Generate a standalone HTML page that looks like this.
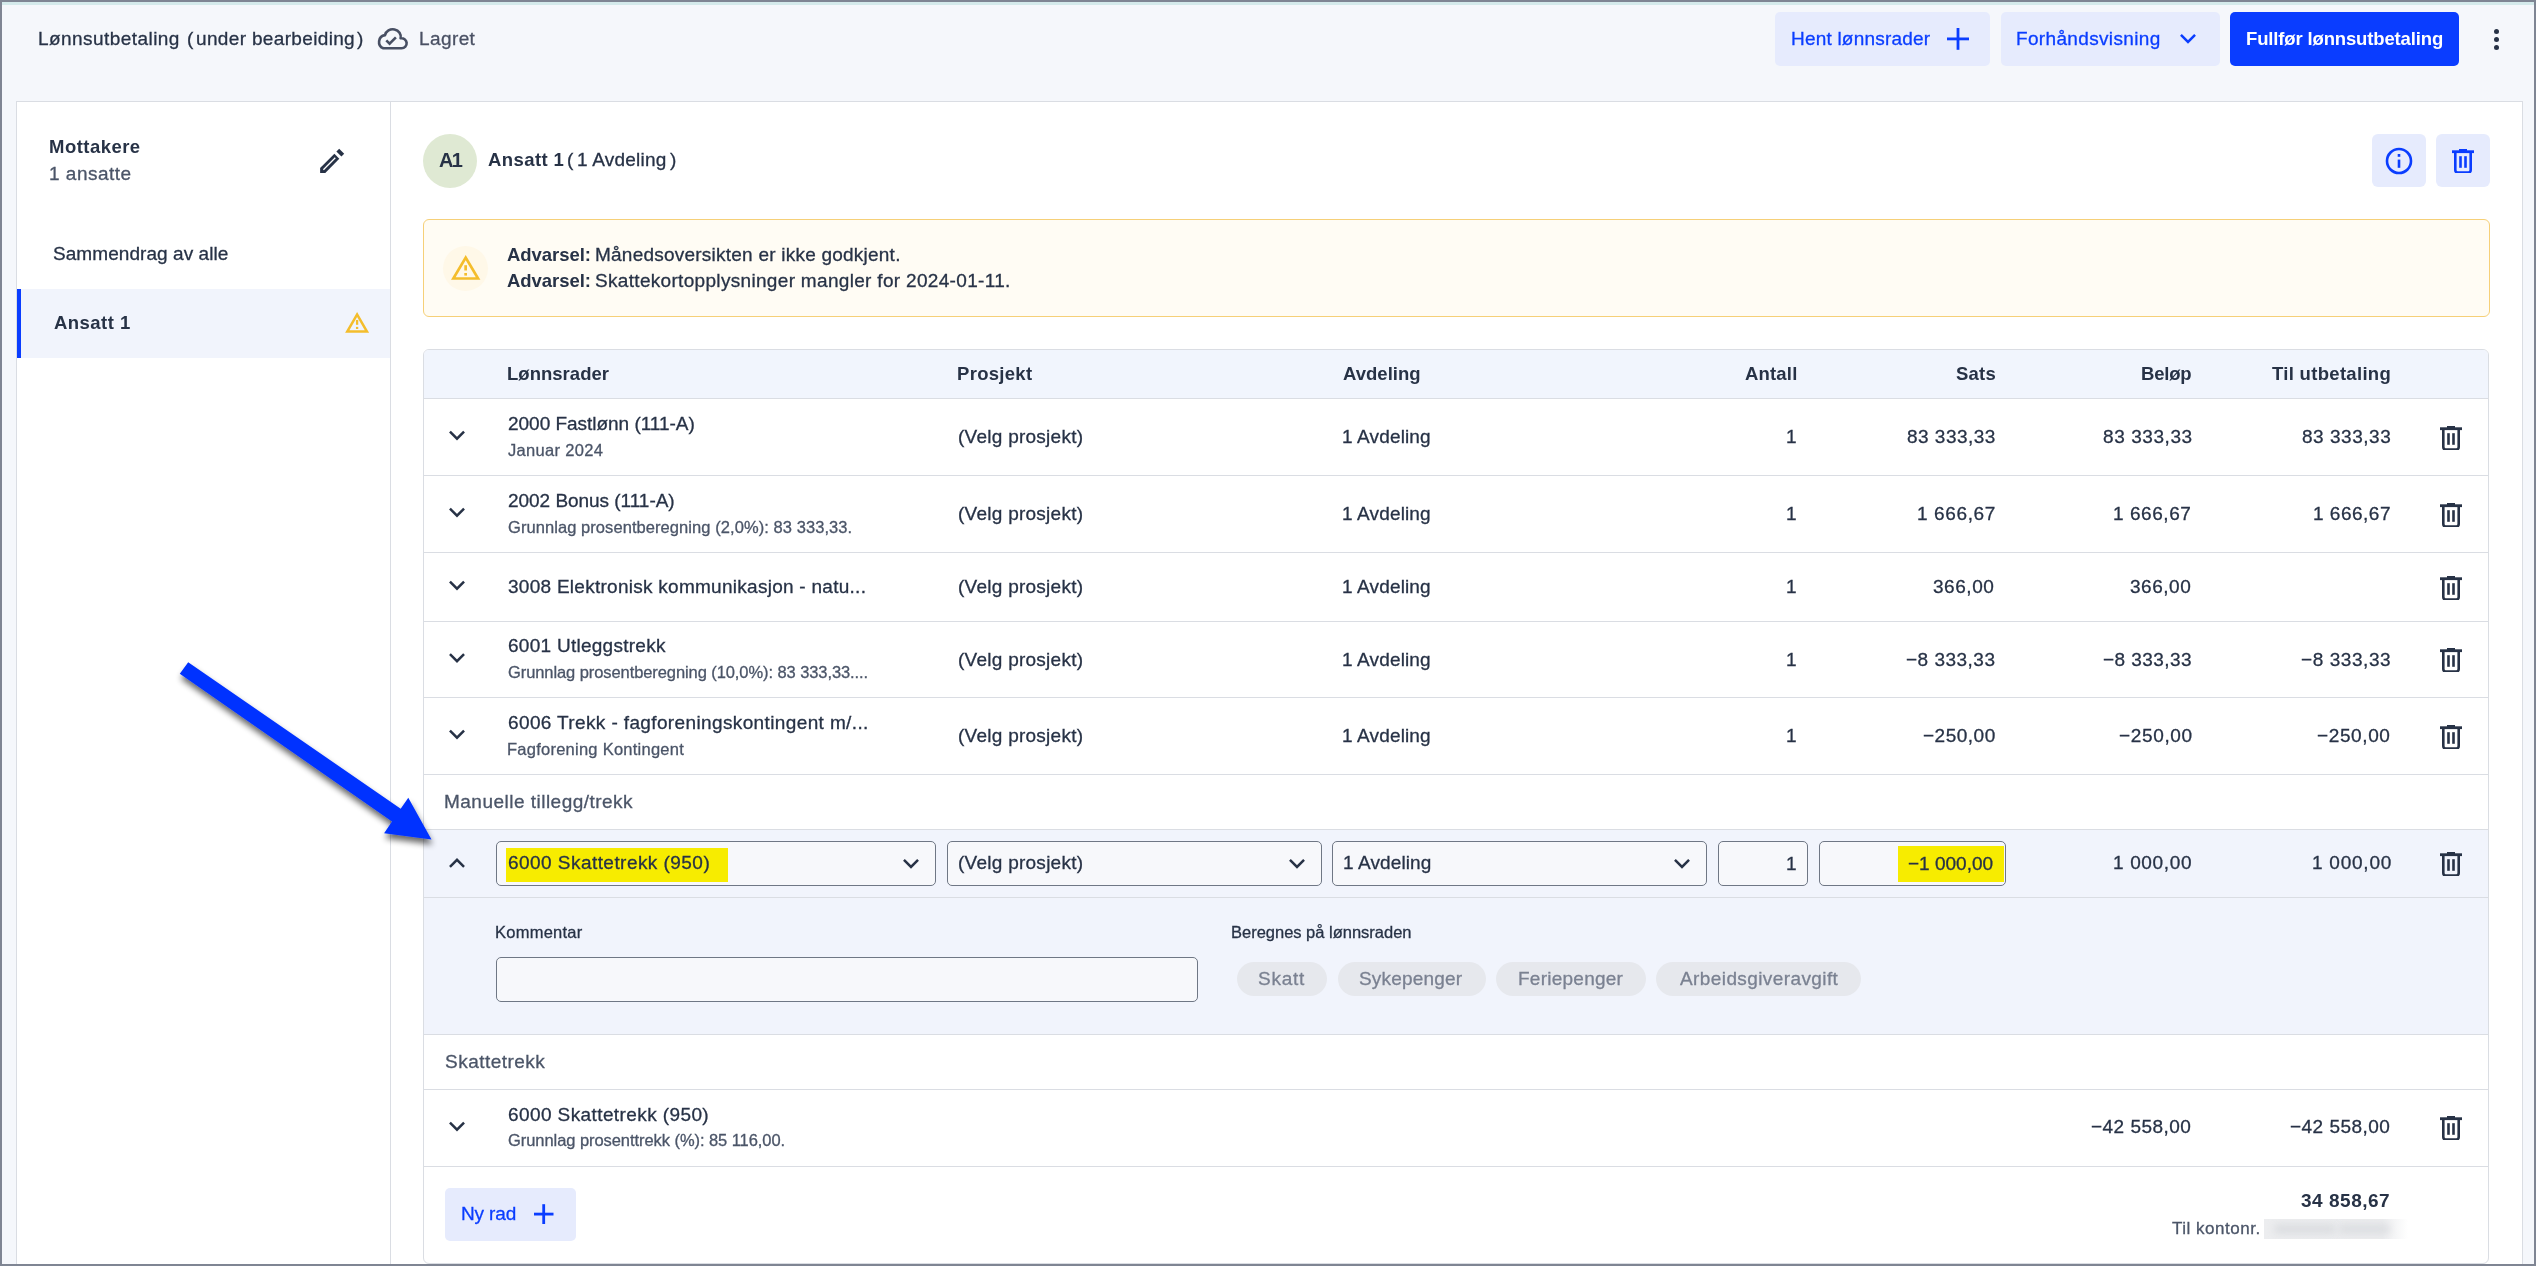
<!DOCTYPE html><html><head><meta charset="utf-8"><style>
html,body{margin:0;padding:0;}
body{width:2536px;height:1266px;position:relative;overflow:hidden;background:#f5f7fb;font-family:"Liberation Sans",sans-serif;}
.t{position:absolute;white-space:nowrap;line-height:1;will-change:transform;}
.r{-webkit-text-stroke:0.3px currentColor;}
</style></head><body>
<div style="position:absolute;left:0px;top:2px;width:2536px;height:3px;background:#d4eaeb"></div>
<div class="t r" id="f1" style="left:38.0px;top:28.85px;font-size:19px;font-weight:400;color:#273246;letter-spacing:0.442px;">Lønnsutbetaling</div>
<div class="t r" style="left:186.5px;top:28.85px;font-size:19px;font-weight:400;color:#273246;">(</div>
<div class="t r" id="f2" style="left:196.0px;top:28.85px;font-size:19px;font-weight:400;color:#273246;letter-spacing:0.344px;">under bearbeiding</div>
<div class="t r" style="left:356.5px;top:28.85px;font-size:19px;font-weight:400;color:#273246;">)</div>
<svg style="position:absolute;left:370px;top:20px" width="45" height="36" viewBox="370 20 45 36"><path d="M383.3,48.3 A6.9,6.9 0 0 1 385,35.1 A7.97,7.4 0 0 1 400.6,38.3 A5.05,5.05 0 1 1 401.6,48.3 Z" fill="none" stroke="#474f63" stroke-width="2.6" stroke-linejoin="round"/><polyline points="386.3,40.4 389.6,43.7 395.9,37.4" fill="none" stroke="#474f63" stroke-width="2.6"/></svg>
<div class="t r" id="f3" style="left:419.0px;top:28.85px;font-size:19px;font-weight:400;color:#4a5164;letter-spacing:0.4px;">Lagret</div>
<div style="position:absolute;left:1775px;top:12px;width:215px;height:54px;background:#e6ebfd;border-radius:5px"></div>
<div class="t r" id="f4" style="left:1790.7px;top:28.85px;font-size:19px;font-weight:400;color:#0a3dff;letter-spacing:0.201px;">Hent lønnsrader</div>
<svg style="position:absolute;left:1940px;top:22px" width="36" height="34" viewBox="1940 22 36 34"><rect x="1956.6" y="28" width="2.8" height="21.8" fill="#0a3dff"/><rect x="1947" y="37.5" width="22" height="2.8" fill="#0a3dff"/></svg>
<div style="position:absolute;left:2001px;top:12px;width:219px;height:54px;background:#e6ebfd;border-radius:5px"></div>
<div class="t r" id="f5" style="left:2016.2px;top:28.85px;font-size:19px;font-weight:400;color:#0a3dff;letter-spacing:0.344px;">Forhåndsvisning</div>
<svg style="position:absolute;left:2176px;top:30px" width="22" height="16" viewBox="2176 30 22 16"><polyline points="2180.95,34.88 2188.00,41.93 2195.05,34.88" fill="none" stroke="#0a3dff" stroke-width="2.5" stroke-linecap="butt" stroke-linejoin="miter"/></svg>
<div style="position:absolute;left:2230px;top:12px;width:229px;height:54px;background:#0a3dff;border-radius:5px"></div>
<div class="t" id="f6" style="left:2245.6px;top:30.07px;font-size:18.5px;font-weight:700;color:#fff;letter-spacing:-0.146px;">Fullfør lønnsutbetaling</div>
<div style="position:absolute;left:2493.5px;top:28.5px;width:5px;height:5px;background:#273246;border-radius:50%"></div>
<div style="position:absolute;left:2493.5px;top:36.5px;width:5px;height:5px;background:#273246;border-radius:50%"></div>
<div style="position:absolute;left:2493.5px;top:44.5px;width:5px;height:5px;background:#273246;border-radius:50%"></div>
<div style="position:absolute;left:16px;top:101px;width:2507px;height:1200px;background:#fff;border:1px solid #dadde3;box-sizing:border-box"></div>
<div style="position:absolute;left:390px;top:102px;width:1px;height:1200px;background:#dadde3"></div>
<div class="t" id="f7" style="left:48.6px;top:138.08px;font-size:18.5px;font-weight:700;color:#273246;letter-spacing:0.466px;">Mottakere</div>
<div class="t r" id="f8" style="left:48.6px;top:163.85px;font-size:19px;font-weight:400;color:#4b5568;letter-spacing:0.5px;">1 ansatte</div>
<svg style="position:absolute;left:310px;top:140px" width="45" height="40" viewBox="310 140 45 40"><polygon points="320.1,173 325.3,173 339.3,158.7 334.4,153.8 320.1,168" fill="#273246"/><line x1="323.4" y1="169.8" x2="335.3" y2="157.8" stroke="#fff" stroke-width="1.3"/><polygon points="344.2,153.7 339.2,148.7 336.4,151.5 341.4,156.5" fill="#273246"/></svg>
<div class="t r" id="f9" style="left:52.8px;top:243.85px;font-size:19px;font-weight:400;color:#273246;letter-spacing:0.065px;">Sammendrag av alle</div>
<div style="position:absolute;left:17px;top:289px;width:373px;height:69px;background:#f1f4fc"></div>
<div style="position:absolute;left:17px;top:289px;width:4px;height:69px;background:#0a3dff"></div>
<div class="t" id="f10" style="left:53.8px;top:314.07px;font-size:18.5px;font-weight:700;color:#273246;letter-spacing:0.458px;">Ansatt 1</div>
<svg style="position:absolute;left:343px;top:310px" width="29" height="25" viewBox="343 310 29 25"><path d="M357.10,312.00 L369.10,332.80 L345.10,332.80 Z M357.10,317.00 L349.43,330.30 L364.77,330.30 Z" fill="#f4bd2c" fill-rule="evenodd"/><rect x="355.95" y="320" width="2.3" height="4.80" fill="#f4bd2c"/><rect x="355.95" y="326.9" width="2.3" height="2.10" fill="#f4bd2c"/></svg>
<div style="position:absolute;left:423px;top:134px;width:54px;height:54px;background:#dfe9d3;border-radius:50%"></div>
<div class="t" id="f11" style="left:438.5px;top:149.6px;font-size:20px;font-weight:700;color:#273246;letter-spacing:-1.6px;">A1</div>
<div class="t" id="f12" style="left:487.9px;top:151.08px;font-size:18.5px;font-weight:700;color:#273246;letter-spacing:0.415px;">Ansatt 1</div>
<div class="t r" style="left:566.5px;top:149.85px;font-size:19px;font-weight:400;color:#273246;">(</div>
<div class="t r" id="f13" style="left:577.3px;top:149.85px;font-size:19px;font-weight:400;color:#273246;letter-spacing:0.223px;">1 Avdeling</div>
<div class="t r" style="left:669.5px;top:149.85px;font-size:19px;font-weight:400;color:#273246;">)</div>
<div style="position:absolute;left:2372px;top:134px;width:54px;height:53px;background:#e6ebfd;border-radius:6px"></div>
<svg style="position:absolute;left:2384px;top:146px" width="30" height="30" viewBox="0 0 30 30"><circle cx="15" cy="15" r="12" fill="none" stroke="#0a3dff" stroke-width="2.6"/><rect x="13.7" y="8" width="2.6" height="2.8" fill="#0a3dff"/><rect x="13.7" y="13.6" width="2.6" height="8.2" fill="#0a3dff"/></svg>
<div style="position:absolute;left:2436px;top:134px;width:54px;height:53px;background:#e6ebfd;border-radius:6px"></div>
<svg style="position:absolute;left:2452px;top:149px" width="22" height="24" viewBox="0 0 22 24"><rect x="7" y="-0.2" width="8" height="3" fill="#0a3dff"/><rect x="0" y="1.3" width="22" height="2.8" fill="#0a3dff"/><path d="M3.3,4 L3.3,21 Q3.3,23.5 5.8,23.5 L16.2,23.5 Q18.7,23.5 18.7,21 L18.7,4" fill="none" stroke="#0a3dff" stroke-width="2.6"/><rect x="7.2" y="7.2" width="2.6" height="11.6" fill="#0a3dff"/><rect x="12.2" y="7.2" width="2.6" height="11.6" fill="#0a3dff"/></svg>
<div style="position:absolute;left:423px;top:219px;width:2067px;height:98px;background:#fffcf4;border:1px solid #f6d078;border-radius:6px;box-sizing:border-box"></div>
<div style="position:absolute;left:443px;top:246px;width:45px;height:45px;background:#fff8e8;border-radius:50%"></div>
<svg style="position:absolute;left:449px;top:253px" width="34" height="29" viewBox="449 253 34 29"><path d="M465.70,255.00 L480.40,279.80 L451.00,279.80 Z M465.70,260.20 L455.65,277.15 L475.75,277.15 Z" fill="#f4bd2c" fill-rule="evenodd"/><rect x="464.3" y="265.2" width="2.7" height="5.30" fill="#f4bd2c"/><rect x="464.3" y="273" width="2.7" height="2.60" fill="#f4bd2c"/></svg>
<div class="t" id="f14" style="left:506.7px;top:246.08px;font-size:18.5px;font-weight:700;color:#273246;letter-spacing:-0.05px;">Advarsel:</div>
<div class="t r" id="f15" style="left:594.8px;top:244.85px;font-size:19px;font-weight:400;color:#273246;letter-spacing:0.23px;">Månedsoversikten er ikke godkjent.</div>
<div class="t" id="f16" style="left:506.7px;top:272.07px;font-size:18.5px;font-weight:700;color:#273246;letter-spacing:-0.05px;">Advarsel:</div>
<div class="t r" id="f17" style="left:594.8px;top:270.85px;font-size:19px;font-weight:400;color:#273246;letter-spacing:0.318px;">Skattekortopplysninger mangler for 2024-01-11.</div>
<div style="position:absolute;left:423px;top:349px;width:2066px;height:915px;background:#fff;border:1px solid #dadde3;border-radius:6px;box-sizing:border-box;overflow:hidden"></div>
<div style="position:absolute;left:424px;top:350px;width:2064px;height:49px;background:#f1f5fd;border-radius:5px 5px 0 0"></div>
<div style="position:absolute;left:424px;top:398px;width:2064px;height:1px;background:#dadde3"></div>
<div style="position:absolute;left:424px;top:475px;width:2064px;height:1px;background:#dadde3"></div>
<div style="position:absolute;left:424px;top:552px;width:2064px;height:1px;background:#dadde3"></div>
<div style="position:absolute;left:424px;top:621px;width:2064px;height:1px;background:#dadde3"></div>
<div style="position:absolute;left:424px;top:697px;width:2064px;height:1px;background:#dadde3"></div>
<div style="position:absolute;left:424px;top:774px;width:2064px;height:1px;background:#dadde3"></div>
<div style="position:absolute;left:424px;top:829px;width:2064px;height:1px;background:#dadde3"></div>
<div style="position:absolute;left:424px;top:897px;width:2064px;height:1px;background:#dadde3"></div>
<div style="position:absolute;left:424px;top:1034px;width:2064px;height:1px;background:#dadde3"></div>
<div style="position:absolute;left:424px;top:1089px;width:2064px;height:1px;background:#dadde3"></div>
<div style="position:absolute;left:424px;top:1166px;width:2064px;height:1px;background:#dadde3"></div>
<div class="t" id="f18" style="left:506.9px;top:365.07px;font-size:18.5px;font-weight:700;color:#273246;letter-spacing:0.025px;">Lønnsrader</div>
<div class="t" id="f19" style="left:956.7px;top:365.07px;font-size:18.5px;font-weight:700;color:#273246;letter-spacing:0.301px;">Prosjekt</div>
<div class="t" id="f20" style="left:1343.2px;top:365.07px;font-size:18.5px;font-weight:700;color:#273246;letter-spacing:0.03px;">Avdeling</div>
<div class="t" id="f21" style="right:738.92px;top:365.07px;font-size:18.5px;font-weight:700;color:#273246;letter-spacing:0.18px;">Antall</div>
<div class="t" id="f22" style="right:540.31px;top:365.07px;font-size:18.5px;font-weight:700;color:#273246;letter-spacing:0.199px;">Sats</div>
<div class="t" id="f23" style="right:345.1px;top:365.07px;font-size:18.5px;font-weight:700;color:#273246;letter-spacing:-0.2px;">Beløp</div>
<div class="t" id="f24" style="right:144.49px;top:365.07px;font-size:18.5px;font-weight:700;color:#273246;letter-spacing:0.308px;">Til utbetaling</div>
<svg style="position:absolute;left:445px;top:426px" width="22" height="16" viewBox="445 426 22 16"><polyline points="449.95,431.69 457.00,438.74 464.05,431.69" fill="none" stroke="#273246" stroke-width="2.5" stroke-linecap="butt" stroke-linejoin="miter"/></svg>
<div class="t r" id="f25" style="left:508.0px;top:413.85px;font-size:19px;font-weight:400;color:#273246;letter-spacing:-0.025px;">2000 Fastlønn (111-A)</div>
<div class="t r" id="f26" style="left:508.0px;top:441.98px;font-size:16.5px;font-weight:400;color:#4b5568;letter-spacing:0.32px;">Januar 2024</div>
<div class="t r" id="f27" style="left:957.5px;top:426.85px;font-size:19px;font-weight:400;color:#273246;letter-spacing:0.257px;">(Velg prosjekt)</div>
<div class="t r" id="f28" style="left:1342.2px;top:426.85px;font-size:19px;font-weight:400;color:#273246;letter-spacing:0.145px;">1 Avdeling</div>
<div class="t r" id="f29" style="right:739.2px;top:426.85px;font-size:19px;font-weight:400;color:#273246;">1</div>
<div class="t r" id="f30" style="right:539.71px;top:426.85px;font-size:19px;font-weight:400;color:#273246;letter-spacing:0.475px;">83 333,33</div>
<div class="t r" id="f31" style="right:343.3px;top:426.85px;font-size:19px;font-weight:400;color:#273246;letter-spacing:0.575px;">83 333,33</div>
<div class="t r" id="f32" style="right:144.66px;top:426.85px;font-size:19px;font-weight:400;color:#273246;letter-spacing:0.525px;">83 333,33</div>
<svg style="position:absolute;left:2440px;top:426px" width="22" height="24" viewBox="0 0 22 24"><rect x="7" y="-0.2" width="8" height="3" fill="#273246"/><rect x="0" y="1.3" width="22" height="2.8" fill="#273246"/><path d="M3.3,4 L3.3,21 Q3.3,23.5 5.8,23.5 L16.2,23.5 Q18.7,23.5 18.7,21 L18.7,4" fill="none" stroke="#273246" stroke-width="2.6"/><rect x="7.2" y="7.2" width="2.6" height="11.6" fill="#273246"/><rect x="12.2" y="7.2" width="2.6" height="11.6" fill="#273246"/></svg>
<svg style="position:absolute;left:445px;top:503px" width="22" height="16" viewBox="445 503 22 16"><polyline points="449.95,508.69 457.00,515.74 464.05,508.69" fill="none" stroke="#273246" stroke-width="2.5" stroke-linecap="butt" stroke-linejoin="miter"/></svg>
<div class="t r" id="f33" style="left:508.0px;top:490.85px;font-size:19px;font-weight:400;color:#273246;letter-spacing:-0.034px;">2002 Bonus (111-A)</div>
<div class="t r" id="f34" style="left:508.0px;top:518.98px;font-size:16.5px;font-weight:400;color:#4b5568;letter-spacing:0.067px;">Grunnlag prosentberegning (2,0%): 83 333,33.</div>
<div class="t r" id="f35" style="left:957.5px;top:503.85px;font-size:19px;font-weight:400;color:#273246;letter-spacing:0.257px;">(Velg prosjekt)</div>
<div class="t r" id="f36" style="left:1342.2px;top:503.85px;font-size:19px;font-weight:400;color:#273246;letter-spacing:0.145px;">1 Avdeling</div>
<div class="t r" id="f37" style="right:739.2px;top:503.85px;font-size:19px;font-weight:400;color:#273246;">1</div>
<div class="t r" id="f38" style="right:540.57px;top:503.85px;font-size:19px;font-weight:400;color:#273246;letter-spacing:0.616px;">1 666,67</div>
<div class="t r" id="f39" style="right:344.34px;top:503.85px;font-size:19px;font-weight:400;color:#273246;letter-spacing:0.557px;">1 666,67</div>
<div class="t r" id="f40" style="right:144.7px;top:503.85px;font-size:19px;font-weight:400;color:#273246;letter-spacing:0.5px;">1 666,67</div>
<svg style="position:absolute;left:2440px;top:503px" width="22" height="24" viewBox="0 0 22 24"><rect x="7" y="-0.2" width="8" height="3" fill="#273246"/><rect x="0" y="1.3" width="22" height="2.8" fill="#273246"/><path d="M3.3,4 L3.3,21 Q3.3,23.5 5.8,23.5 L16.2,23.5 Q18.7,23.5 18.7,21 L18.7,4" fill="none" stroke="#273246" stroke-width="2.6"/><rect x="7.2" y="7.2" width="2.6" height="11.6" fill="#273246"/><rect x="12.2" y="7.2" width="2.6" height="11.6" fill="#273246"/></svg>
<svg style="position:absolute;left:445px;top:576px" width="22" height="16" viewBox="445 576 22 16"><polyline points="449.95,581.68 457.00,588.73 464.05,581.68" fill="none" stroke="#273246" stroke-width="2.5" stroke-linecap="butt" stroke-linejoin="miter"/></svg>
<div class="t r" id="f41" style="left:508.0px;top:576.85px;font-size:19px;font-weight:400;color:#273246;letter-spacing:0.269px;">3008 Elektronisk kommunikasjon - natu...</div>
<div class="t r" id="f42" style="left:957.5px;top:576.85px;font-size:19px;font-weight:400;color:#273246;letter-spacing:0.257px;">(Velg prosjekt)</div>
<div class="t r" id="f43" style="left:1342.2px;top:576.85px;font-size:19px;font-weight:400;color:#273246;letter-spacing:0.145px;">1 Avdeling</div>
<div class="t r" id="f44" style="right:739.2px;top:576.85px;font-size:19px;font-weight:400;color:#273246;">1</div>
<div class="t r" id="f45" style="right:541.66px;top:576.85px;font-size:19px;font-weight:400;color:#273246;letter-spacing:0.54px;">366,00</div>
<div class="t r" id="f46" style="right:344.38px;top:576.85px;font-size:19px;font-weight:400;color:#273246;letter-spacing:0.52px;">366,00</div>
<svg style="position:absolute;left:2440px;top:576px" width="22" height="24" viewBox="0 0 22 24"><rect x="7" y="-0.2" width="8" height="3" fill="#273246"/><rect x="0" y="1.3" width="22" height="2.8" fill="#273246"/><path d="M3.3,4 L3.3,21 Q3.3,23.5 5.8,23.5 L16.2,23.5 Q18.7,23.5 18.7,21 L18.7,4" fill="none" stroke="#273246" stroke-width="2.6"/><rect x="7.2" y="7.2" width="2.6" height="11.6" fill="#273246"/><rect x="12.2" y="7.2" width="2.6" height="11.6" fill="#273246"/></svg>
<svg style="position:absolute;left:445px;top:649px" width="22" height="16" viewBox="445 649 22 16"><polyline points="449.95,654.18 457.00,661.23 464.05,654.18" fill="none" stroke="#273246" stroke-width="2.5" stroke-linecap="butt" stroke-linejoin="miter"/></svg>
<div class="t r" id="f47" style="left:508.0px;top:635.85px;font-size:19px;font-weight:400;color:#273246;letter-spacing:0.27px;">6001 Utleggstrekk</div>
<div class="t r" id="f48" style="left:508.0px;top:663.98px;font-size:16.5px;font-weight:400;color:#4b5568;letter-spacing:-0.085px;">Grunnlag prosentberegning (10,0%): 83 333,33....</div>
<div class="t r" id="f49" style="left:957.5px;top:649.85px;font-size:19px;font-weight:400;color:#273246;letter-spacing:0.257px;">(Velg prosjekt)</div>
<div class="t r" id="f50" style="left:1342.2px;top:649.85px;font-size:19px;font-weight:400;color:#273246;letter-spacing:0.145px;">1 Avdeling</div>
<div class="t r" id="f51" style="right:739.2px;top:649.85px;font-size:19px;font-weight:400;color:#273246;">1</div>
<div class="t r" id="f52" style="right:540.71px;top:649.85px;font-size:19px;font-weight:400;color:#273246;letter-spacing:0.491px;">−8 333,33</div>
<div class="t r" id="f53" style="right:344.46px;top:649.85px;font-size:19px;font-weight:400;color:#273246;letter-spacing:0.438px;">−8 333,33</div>
<div class="t r" id="f54" style="right:144.62px;top:649.85px;font-size:19px;font-weight:400;color:#273246;letter-spacing:0.575px;">−8 333,33</div>
<svg style="position:absolute;left:2440px;top:648px" width="22" height="24" viewBox="0 0 22 24"><rect x="7" y="-0.2" width="8" height="3" fill="#273246"/><rect x="0" y="1.3" width="22" height="2.8" fill="#273246"/><path d="M3.3,4 L3.3,21 Q3.3,23.5 5.8,23.5 L16.2,23.5 Q18.7,23.5 18.7,21 L18.7,4" fill="none" stroke="#273246" stroke-width="2.6"/><rect x="7.2" y="7.2" width="2.6" height="11.6" fill="#273246"/><rect x="12.2" y="7.2" width="2.6" height="11.6" fill="#273246"/></svg>
<svg style="position:absolute;left:445px;top:725px" width="22" height="16" viewBox="445 725 22 16"><polyline points="449.95,730.68 457.00,737.73 464.05,730.68" fill="none" stroke="#273246" stroke-width="2.5" stroke-linecap="butt" stroke-linejoin="miter"/></svg>
<div class="t r" id="f55" style="left:508.0px;top:712.85px;font-size:19px;font-weight:400;color:#273246;letter-spacing:0.374px;">6006 Trekk - fagforeningskontingent m/...</div>
<div class="t r" id="f56" style="left:507.0px;top:740.98px;font-size:16.5px;font-weight:400;color:#4b5568;letter-spacing:0.249px;">Fagforening Kontingent</div>
<div class="t r" id="f57" style="left:957.5px;top:725.85px;font-size:19px;font-weight:400;color:#273246;letter-spacing:0.257px;">(Velg prosjekt)</div>
<div class="t r" id="f58" style="left:1342.2px;top:725.85px;font-size:19px;font-weight:400;color:#273246;letter-spacing:0.145px;">1 Avdeling</div>
<div class="t r" id="f59" style="right:739.2px;top:725.85px;font-size:19px;font-weight:400;color:#273246;">1</div>
<div class="t r" id="f60" style="right:540.7px;top:725.85px;font-size:19px;font-weight:400;color:#273246;letter-spacing:0.5px;">−250,00</div>
<div class="t r" id="f61" style="right:343.24px;top:725.85px;font-size:19px;font-weight:400;color:#273246;letter-spacing:0.651px;">−250,00</div>
<div class="t r" id="f62" style="right:145.57px;top:725.85px;font-size:19px;font-weight:400;color:#273246;letter-spacing:0.618px;">−250,00</div>
<svg style="position:absolute;left:2440px;top:725px" width="22" height="24" viewBox="0 0 22 24"><rect x="7" y="-0.2" width="8" height="3" fill="#273246"/><rect x="0" y="1.3" width="22" height="2.8" fill="#273246"/><path d="M3.3,4 L3.3,21 Q3.3,23.5 5.8,23.5 L16.2,23.5 Q18.7,23.5 18.7,21 L18.7,4" fill="none" stroke="#273246" stroke-width="2.6"/><rect x="7.2" y="7.2" width="2.6" height="11.6" fill="#273246"/><rect x="12.2" y="7.2" width="2.6" height="11.6" fill="#273246"/></svg>
<div class="t r" id="f63" style="left:444.2px;top:791.85px;font-size:19px;font-weight:400;color:#4b5568;letter-spacing:0.481px;">Manuelle tillegg/trekk</div>
<div style="position:absolute;left:424px;top:830px;width:2064px;height:67px;background:#f1f4fc"></div>
<svg style="position:absolute;left:445px;top:854px" width="22" height="16" viewBox="445 854 22 16"><polyline points="449.95,866.82 457.00,859.77 464.05,866.82" fill="none" stroke="#273246" stroke-width="2.5" stroke-linecap="butt" stroke-linejoin="miter"/></svg>
<div style="position:absolute;left:496px;top:841px;width:440px;height:45px;background:#f7f8fb;border:1px solid #6f7785;border-radius:5px;box-sizing:border-box"></div>
<div style="position:absolute;left:506px;top:848px;width:222px;height:34px;background:#f7ec00"></div>
<div class="t r" id="f64" style="left:508.3px;top:852.85px;font-size:19px;font-weight:400;color:#273246;letter-spacing:0.452px;">6000 Skattetrekk (950)</div>
<svg style="position:absolute;left:899px;top:855px" width="22" height="16" viewBox="899 855 22 16"><polyline points="903.95,859.88 911.00,866.93 918.05,859.88" fill="none" stroke="#273246" stroke-width="2.5" stroke-linecap="butt" stroke-linejoin="miter"/></svg>
<div style="position:absolute;left:947px;top:841px;width:375px;height:45px;background:#f7f8fb;border:1px solid #6f7785;border-radius:5px;box-sizing:border-box"></div>
<div class="t r" id="f65" style="left:958.0px;top:852.85px;font-size:19px;font-weight:400;color:#273246;letter-spacing:0.258px;">(Velg prosjekt)</div>
<svg style="position:absolute;left:1285px;top:855px" width="22" height="16" viewBox="1285 855 22 16"><polyline points="1289.95,859.88 1297.00,866.93 1304.05,859.88" fill="none" stroke="#273246" stroke-width="2.5" stroke-linecap="butt" stroke-linejoin="miter"/></svg>
<div style="position:absolute;left:1332px;top:841px;width:375px;height:45px;background:#f7f8fb;border:1px solid #6f7785;border-radius:5px;box-sizing:border-box"></div>
<div class="t r" id="f66" style="left:1343.0px;top:852.85px;font-size:19px;font-weight:400;color:#273246;letter-spacing:0.111px;">1 Avdeling</div>
<svg style="position:absolute;left:1670px;top:855px" width="22" height="16" viewBox="1670 855 22 16"><polyline points="1674.95,859.88 1682.00,866.93 1689.05,859.88" fill="none" stroke="#273246" stroke-width="2.5" stroke-linecap="butt" stroke-linejoin="miter"/></svg>
<div style="position:absolute;left:1718px;top:841px;width:90px;height:45px;background:#f7f8fb;border:1px solid #6f7785;border-radius:5px;box-sizing:border-box"></div>
<div class="t r" id="f67" style="right:739.2px;top:853.85px;font-size:19px;font-weight:400;color:#273246;">1</div>
<div style="position:absolute;left:1819px;top:841px;width:187px;height:45px;background:#f7f8fb;border:1px solid #6f7785;border-radius:5px;box-sizing:border-box"></div>
<div style="position:absolute;left:1898px;top:846px;width:106px;height:36px;background:#f7ec00"></div>
<div class="t r" id="f68" style="right:542.89px;top:853.85px;font-size:19px;font-weight:400;color:#273246;letter-spacing:0.009px;">−1 000,00</div>
<div class="t r" id="f69" style="right:344.16px;top:852.85px;font-size:19px;font-weight:400;color:#273246;letter-spacing:0.643px;">1 000,00</div>
<div class="t r" id="f70" style="right:144.33px;top:852.85px;font-size:19px;font-weight:400;color:#273246;letter-spacing:0.759px;">1 000,00</div>
<svg style="position:absolute;left:2440px;top:852px" width="22" height="24" viewBox="0 0 22 24"><rect x="7" y="-0.2" width="8" height="3" fill="#273246"/><rect x="0" y="1.3" width="22" height="2.8" fill="#273246"/><path d="M3.3,4 L3.3,21 Q3.3,23.5 5.8,23.5 L16.2,23.5 Q18.7,23.5 18.7,21 L18.7,4" fill="none" stroke="#273246" stroke-width="2.6"/><rect x="7.2" y="7.2" width="2.6" height="11.6" fill="#273246"/><rect x="12.2" y="7.2" width="2.6" height="11.6" fill="#273246"/></svg>
<div style="position:absolute;left:424px;top:898px;width:2064px;height:136px;background:#f1f4fc"></div>
<div class="t r" id="f71" style="left:495.0px;top:923.98px;font-size:16.5px;font-weight:400;color:#273246;letter-spacing:0.25px;">Kommentar</div>
<div style="position:absolute;left:496px;top:957px;width:702px;height:45px;background:#f7f8fb;border:1px solid #6f7785;border-radius:5px;box-sizing:border-box"></div>
<div class="t r" id="f72" style="left:1231.3px;top:923.98px;font-size:16.5px;font-weight:400;color:#273246;letter-spacing:-0.011px;">Beregnes på lønnsraden</div>
<div style="position:absolute;left:1237px;top:962px;width:90px;height:34px;background:#e6e8ed;border-radius:17px"></div>
<div class="t r" id="f73" style="left:1258.0px;top:968.85px;font-size:19px;font-weight:400;color:#7a8191;letter-spacing:0.775px;">Skatt</div>
<div style="position:absolute;left:1338px;top:962px;width:148px;height:34px;background:#e6e8ed;border-radius:17px"></div>
<div class="t r" id="f74" style="left:1359.4px;top:968.85px;font-size:19px;font-weight:400;color:#7a8191;letter-spacing:0.188px;">Sykepenger</div>
<div style="position:absolute;left:1496px;top:962px;width:150px;height:34px;background:#e6e8ed;border-radius:17px"></div>
<div class="t r" id="f75" style="left:1518.0px;top:968.85px;font-size:19px;font-weight:400;color:#7a8191;letter-spacing:0.25px;">Feriepenger</div>
<div style="position:absolute;left:1656px;top:962px;width:205px;height:34px;background:#e6e8ed;border-radius:17px"></div>
<div class="t r" id="f76" style="left:1679.8px;top:968.85px;font-size:19px;font-weight:400;color:#7a8191;letter-spacing:0.405px;">Arbeidsgiveravgift</div>
<div class="t r" id="f77" style="left:444.8px;top:1051.85px;font-size:19px;font-weight:400;color:#4b5568;letter-spacing:0.48px;">Skattetrekk</div>
<svg style="position:absolute;left:445px;top:1117px" width="22" height="16" viewBox="445 1117 22 16"><polyline points="449.95,1122.68 457.00,1129.73 464.05,1122.68" fill="none" stroke="#273246" stroke-width="2.5" stroke-linecap="butt" stroke-linejoin="miter"/></svg>
<div class="t r" id="f78" style="left:508.4px;top:1104.85px;font-size:19px;font-weight:400;color:#273246;letter-spacing:0.404px;">6000 Skattetrekk (950)</div>
<div class="t r" id="f79" style="left:508.4px;top:1131.97px;font-size:16.5px;font-weight:400;color:#4b5568;letter-spacing:-0.063px;">Grunnlag prosenttrekk (%): 85 116,00.</div>
<div class="t r" id="f80" style="right:344.52px;top:1116.85px;font-size:19px;font-weight:400;color:#273246;letter-spacing:0.478px;">−42 558,00</div>
<div class="t r" id="f81" style="right:145.31px;top:1116.85px;font-size:19px;font-weight:400;color:#273246;letter-spacing:0.469px;">−42 558,00</div>
<svg style="position:absolute;left:2440px;top:1116px" width="22" height="24" viewBox="0 0 22 24"><rect x="7" y="-0.2" width="8" height="3" fill="#273246"/><rect x="0" y="1.3" width="22" height="2.8" fill="#273246"/><path d="M3.3,4 L3.3,21 Q3.3,23.5 5.8,23.5 L16.2,23.5 Q18.7,23.5 18.7,21 L18.7,4" fill="none" stroke="#273246" stroke-width="2.6"/><rect x="7.2" y="7.2" width="2.6" height="11.6" fill="#273246"/><rect x="12.2" y="7.2" width="2.6" height="11.6" fill="#273246"/></svg>
<div style="position:absolute;left:445px;top:1188px;width:131px;height:53px;background:#e6ebfd;border-radius:5px"></div>
<div class="t r" id="f82" style="left:460.7px;top:1203.85px;font-size:19px;font-weight:400;color:#0a3dff;letter-spacing:-0.14px;">Ny rad</div>
<svg style="position:absolute;left:530px;top:1200px" width="28" height="28" viewBox="530 1200 28 28"><rect x="542.3" y="1204.2" width="2.8" height="19.8" fill="#0a3dff"/><rect x="534" y="1212.7" width="19.5" height="2.8" fill="#0a3dff"/></svg>
<div class="t" id="f83" style="right:145.48px;top:1190.65px;font-size:19px;font-weight:700;color:#273246;letter-spacing:0.516px;">34 858,67</div>
<div class="t r" id="f84" style="left:2172.0px;top:1219.55px;font-size:17px;font-weight:400;color:#4b5568;letter-spacing:0.518px;">Til kontonr.</div>
<div style="position:absolute;left:2264px;top:1219px;width:144px;height:20px;overflow:hidden;background:linear-gradient(90deg,#ecedef 0%,#ebecee 82%,rgba(255,255,255,0) 100%)"><div style="position:absolute;left:10px;top:5px;width:62px;height:10px;background:#dcdee1;filter:blur(3.5px);border-radius:5px"></div><div style="position:absolute;left:74px;top:5px;width:52px;height:10px;background:#dddfe2;filter:blur(3.5px);border-radius:5px"></div></div>
<svg style="position:absolute;left:150px;top:630px" width="310" height="240" viewBox="150 630 310 240"><defs><filter id="sh" x="-20%" y="-20%" width="140%" height="140%"><feGaussianBlur in="SourceAlpha" stdDeviation="3.2"/><feOffset dx="0.5" dy="5"/><feComponentTransfer><feFuncA type="linear" slope="0.6"/></feComponentTransfer><feMerge><feMergeNode/><feMergeNode in="SourceGraphic"/></feMerge></filter></defs>
<polygon points="188.2,662.3 400.7,808.8 408.3,797.7 431.5,839.6 384.1,833.3 392,821.4 179.8,673.7" fill="#0033ff" filter="url(#sh)"/></svg>
<div style="position:absolute;left:0px;top:0px;width:2536px;height:2px;background:#7f8593"></div>
<div style="position:absolute;left:0px;top:1264px;width:2536px;height:2px;background:#7f8593"></div>
<div style="position:absolute;left:0px;top:0px;width:2px;height:1266px;background:#7f8593"></div>
<div style="position:absolute;left:2534px;top:0px;width:2px;height:1266px;background:#7f8593"></div>
</body></html>
